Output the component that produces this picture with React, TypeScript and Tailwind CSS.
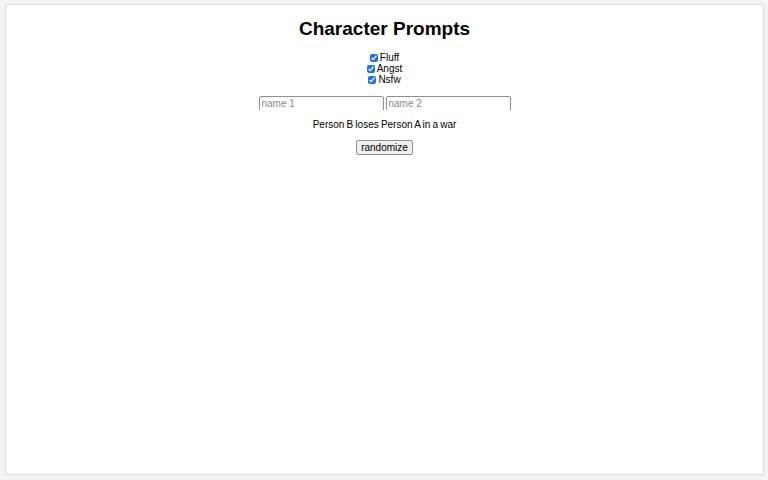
import React from "react";

export default function App() {
  return (
    <div className="w-[768px] h-[480px] bg-[#f3f3f3] pt-[4px] pl-[5px]" style={{ fontFamily: '"Liberation Sans", Arial, sans-serif' }}>
      <div className="w-[759px] h-[471px] bg-white border border-[#dcdcdc] flex flex-col items-center text-black">
        <h1 className="mt-[12px] text-[19px] font-bold leading-[24px]">Character Prompts</h1>
        <div className="mt-[11px] flex flex-col items-center text-[10px] leading-[11px]">
          {["Fluff", "Angst", "Nsfw"].map((l) => (
            <label key={l} className="flex items-center gap-[2px]">
              <input type="checkbox" defaultChecked className="w-[8px] h-[8px] m-0 accent-[#1a73e8]" />
              <span>{l}</span>
            </label>
          ))}
        </div>
        <div className="mt-[11px] h-[14px] overflow-hidden flex gap-[2px]">
          <input placeholder="name 1" className="w-[125px] h-[15px] border border-[#8f8f8f] rounded-[2px] px-[2px] text-[10px] leading-[12px] placeholder:text-[#8a8a8a] outline-none" />
          <input placeholder="name 2" className="w-[125px] h-[15px] border border-[#8f8f8f] rounded-[2px] px-[2px] text-[10px] leading-[12px] placeholder:text-[#8a8a8a] outline-none" />
        </div>
        <p className="mt-[9px] text-[10px] leading-[12px] [word-spacing:-0.6px]">Person B loses Person A in a war</p>
        <button className="mt-[9px] h-[15px] px-[4px] text-[10px] leading-[12px] bg-[#efefef] border border-[#8f8f8f] rounded-[2px]">randomize</button>
      </div>
    </div>
  );
}
